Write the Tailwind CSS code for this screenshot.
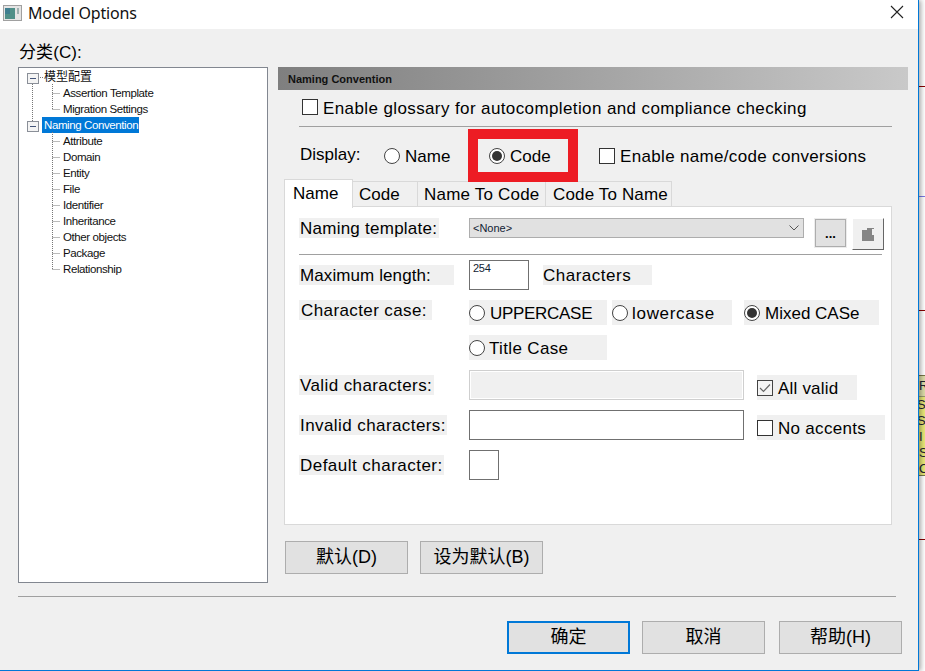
<!DOCTYPE html>
<html lang="en">
<head>
<meta charset="UTF-8">
<title>Model Options</title>
<script src="https://cdn.jsdelivr.net/npm/@tailwindcss/browser@4"></script>
</head>
<body class="bg-white">
<div class="relative w-[925px] h-[671px] overflow-hidden bg-white text-black text-[17px] font-['Liberation_Sans','Noto_Sans_CJK_SC',sans-serif]">

  <!-- app behind the dialog -->
  <div class="absolute left-[919px] top-[86px] w-[6px] h-px bg-[#8b0000]"></div>
  <div class="absolute left-[919px] top-[196px] w-[6px] h-px bg-[#7a7ae6]"></div>
  <div class="absolute left-[919px] top-[310px] w-[6px] h-px bg-[#8b0000]"></div>
  <div class="absolute left-[919px] top-[539px] w-[6px] h-px bg-[#8b0000]"></div>
  <div class="absolute left-[919px] top-[375px] w-[6px] h-[101px] bg-[#e8e878] border-y border-[#77774a] overflow-hidden text-[13px] leading-[16px] text-[#223]">
    <div class="h-[21px] bg-[#dcdca8] border-b border-[#9a9a70] leading-[20px]">R</div>
    <div class="h-4 -ml-[2px]">S</div>
    <div class="h-4 -ml-[2px]">S</div>
    <div class="h-4">I</div>
    <div class="h-4">S</div>
    <div class="h-4">O</div>
  </div>

  <!-- dialog -->
  <div class="relative w-[919px] h-[671px] bg-[#f0f0f0] border-r border-b border-[#0078d7] shadow-[2px_0_5px_rgba(0,0,0,0.35)]">

    <!-- title bar -->
    <div class="h-[29px] bg-white flex items-center pl-[3px]">
      <svg width="19" height="16" viewBox="0 0 19 16" class="mb-[3px]">
        <rect x="0.5" y="0.5" width="18" height="15" fill="#e4e4e4" stroke="#a0a0a0"/>
        <rect x="2" y="3" width="10" height="11" fill="#4f8f88"/>
        <rect x="2" y="3" width="5" height="6" fill="#3f7f90"/>
        <rect x="14" y="3" width="2" height="6" fill="#9fb0b0"/>
      </svg>
      <span class="ml-[6px] mb-[3px] text-[16px] tracking-[-0.15px] text-[#111] font-['Noto_Sans',sans-serif]">Model Options</span>
      <svg width="14" height="14" viewBox="0 0 14 14" class="ml-auto mr-[14px] mb-[5px]">
        <path d="M1 1L13 13M13 1L1 13" stroke="#222" stroke-width="1.1" fill="none"/>
      </svg>
    </div>

    <div class="h-[38px] pl-[19px] pt-[14px] leading-[20px] tracking-[0.1px]">分类(C):</div>

    <div class="flex pl-[18px] h-[516px]">
      <!-- tree -->
      <div class="relative w-[250px] bg-white border border-[#828790] pt-[1px] text-[11.5px] tracking-[-0.4px] leading-[16px] text-[#111] whitespace-nowrap">
        <svg width="70" height="210" viewBox="0 0 70 210" class="absolute left-0 top-0">
          <g stroke="#777" stroke-dasharray="1 1" fill="none">
            <path d="M13.5 16V54M19 9.5H25M33.5 16V42M33.5 64V201M33.5 25.5H41M33.5 41.5H41M33.5 73.5H41M33.5 89.5H41M33.5 105.5H41M33.5 121.5H41M33.5 137.5H41M33.5 153.5H41M33.5 169.5H41M33.5 185.5H41M33.5 201.5H41"/>
          </g>
          <rect x="8.5" y="5.5" width="11" height="10" fill="#f4f4f4" stroke="#8a8f98"/>
          <path d="M11 10.5H17" stroke="#44557a"/>
          <rect x="8.5" y="53.5" width="11" height="10" fill="#f4f4f4" stroke="#8a8f98"/>
          <path d="M11 58.5H17" stroke="#44557a"/>
        </svg>
        <div class="h-4 pl-[25px] text-[12px] tracking-normal">模型配置</div>
        <div class="h-4 pl-[44px]">Assertion Template</div>
        <div class="h-4 pl-[44px]">Migration Settings</div>
        <div class="h-4 pl-[23px]"><span class="inline-block h-4 w-[97px] pl-[2px] bg-[#0078d7] text-white">Naming Convention</span></div>
        <div class="h-4 pl-[44px]">Attribute</div>
        <div class="h-4 pl-[44px]">Domain</div>
        <div class="h-4 pl-[44px]">Entity</div>
        <div class="h-4 pl-[44px]">File</div>
        <div class="h-4 pl-[44px]">Identifier</div>
        <div class="h-4 pl-[44px]">Inheritance</div>
        <div class="h-4 pl-[44px]">Other objects</div>
        <div class="h-4 pl-[44px]">Package</div>
        <div class="h-4 pl-[44px]">Relationship</div>
      </div>

      <!-- right column -->
      <div class="ml-[10px] w-[630px]">
        <div class="h-[23px] pl-[10px] pt-[1px] bg-gradient-to-r from-[#7f7f7f] to-[#c9c9c9] text-[11px] font-bold leading-[22px] text-[#111]">Naming Convention</div>

        <div class="h-[36px] pl-[24px] pt-[9px] flex items-start">
          <span class="w-4 h-4 border border-[#333] bg-white"></span>
          <span class="ml-[5px] mt-px tracking-[0.39px] leading-[17px]">Enable glossary for autocompletion and compliance checking</span>
        </div>
        <div class="ml-[21px] w-[593px] h-px bg-[#a0a0a0]"></div>

        <!-- display row -->
        <div class="flex items-center mt-[2px] ml-[22px] h-[53px] leading-[22px]">
          <span class="w-[84px] -mt-[2px]">Display:</span>
          <span class="w-4 h-4 rounded-full border border-[#444] bg-white"></span>
          <span class="ml-[5px] w-[63px] mt-[2px]">Name</span>
          <div class="relative z-10 w-[110px] h-[53px] border-[10px] border-[#ed1c24] flex items-center pl-[11px]">
            <span class="w-4 h-4 rounded-full border border-[#444] bg-white flex items-center justify-center"><span class="w-[10px] h-[10px] rounded-full bg-[#333]"></span></span>
            <span class="ml-[5px] mt-[2px]">Code</span>
          </div>
          <span class="ml-[21px] w-4 h-4 border border-[#333] bg-white"></span>
          <span class="ml-[5px] mt-[2px] tracking-[0.33px]">Enable name/code conversions</span>
        </div>

        <!-- tabs -->
        <div class="flex items-end -mt-[4px] ml-[6px] h-[29px] relative z-0 leading-[20px]">
          <div class="relative z-10 w-[69px] h-[29px] bg-white border border-b-0 border-[#d9d9d9] pl-[8px] pt-[4px] -mb-px">Name</div>
          <div class="w-[65px] h-[26px] border-y border-r border-[#d9d9d9] pl-[6px] pt-[3px]">Code</div>
          <div class="w-[128px] h-[26px] border-y border-r border-[#d9d9d9] pl-[6px] pt-[3px] tracking-[0.2px]">Name To Code</div>
          <div class="w-[126px] h-[26px] border-y border-r border-[#d9d9d9] pl-[7px] pt-[3px] tracking-[0.15px]">Code To Name</div>
        </div>

        <!-- panel -->
        <div class="ml-[6px] w-[608px] h-[319px] -mt-px bg-white border border-[#d9d9d9] pl-[14px] pt-[11px] leading-[22px]">
          <div class="flex items-start h-[32px]">
            <div class="w-[170px]"><span class="block w-[140px] h-[20px] bg-[#f0f0f0] pl-px tracking-[0.25px]">Naming template:</span></div>
            <div class="w-[335px] h-[20px] bg-[#e1e1e1] border border-[#adadad] flex items-center pl-[3px] text-[11px] text-[#123]">
              <span>&lt;None&gt;</span>
              <svg width="10" height="6" viewBox="0 0 10 6" class="ml-auto mr-[4px]"><path d="M0.5 0.5L5 5L9.5 0.5" stroke="#555" fill="none"/></svg>
            </div>
            <div class="ml-[11px] mt-px w-[31px] h-[28px] bg-[#e1e1e1] border border-[#adadad] text-center font-bold text-[13px] leading-[28px] outline outline-[#ececec]">...</div>
            <div class="ml-[6px] w-[32px] h-[32px] bg-[#f0f0f0] border border-t-white border-l-white border-r-[#666] border-b-[#666] flex items-center justify-center">
              <svg width="12" height="13" viewBox="0 0 12 13"><path d="M0 2H5V0H12V13H0Z" fill="#858585"/><path d="M10 1H12V7H10Z" fill="#f0f0f0"/></svg>
            </div>
          </div>
          <div class="mt-[4px] w-[583px] h-px bg-[#a0a0a0]"></div>

          <div class="flex items-start mt-[5px]">
            <div class="w-[170px] pt-[5px]"><span class="block w-[155px] h-[20px] bg-[#f0f0f0] pl-px tracking-[0.1px]">Maximum length:</span></div>
            <div class="w-[60px] h-[30px] border border-[#707070] pl-[3px] text-[11px] tracking-[-0.3px] leading-[15px] text-[#123]">254</div>
            <div class="ml-[14px] mt-[5px] w-[109px] h-[20px] bg-[#f0f0f0] tracking-[0.5px]">Characters</div>
          </div>

          <div class="flex items-start mt-[10px]">
            <div class="w-[170px]"><span class="block w-[133px] h-[20px] bg-[#f0f0f0] pl-[2px] tracking-[0.4px]">Character case:</span></div>
            <div class="w-[138px] h-[25px] bg-[#f0f0f0] flex items-center">
              <span class="w-4 h-4 rounded-full border border-[#444] bg-white"></span><span class="ml-[5px] mt-[2px] tracking-[-0.3px]">UPPERCASE</span>
            </div>
            <div class="ml-[5px] w-[120px] h-[25px] bg-[#f0f0f0] flex items-center">
              <span class="w-4 h-4 rounded-full border border-[#444] bg-white"></span><span class="ml-[4px] mt-[2px] tracking-[0.7px]">lowercase</span>
            </div>
            <div class="ml-[12px] w-[135px] h-[25px] bg-[#f0f0f0] flex items-center">
              <span class="w-4 h-4 rounded-full border border-[#444] bg-white flex items-center justify-center"><span class="w-[10px] h-[10px] rounded-full bg-[#333]"></span></span><span class="ml-[5px] mt-[2px]">Mixed CASe</span>
            </div>
          </div>

          <div class="mt-[10px] ml-[170px] w-[138px] h-[25px] bg-[#f0f0f0] flex items-center">
            <span class="w-4 h-4 rounded-full border border-[#444] bg-white"></span><span class="ml-[4px] mt-[2px] tracking-[0.35px]">Title Case</span>
          </div>

          <div class="flex items-start mt-[10px]">
            <div class="w-[170px] pt-[5px]"><span class="block w-[135px] h-[20px] bg-[#f0f0f0] pl-px tracking-[0.4px]">Valid characters:</span></div>
            <div class="w-[275px] h-[30px] bg-[#f0f0f0] border border-[#cfcfcf] shadow-[inset_0_0_0_1px_white]"></div>
            <div class="ml-[13px] mt-[5px] w-[100px] h-[25px] bg-[#f0f0f0] flex items-center">
              <span class="w-4 h-4 border border-[#444] bg-[#f4f4f4] flex items-center justify-center">
                <svg width="12" height="10" viewBox="0 0 12 10"><path d="M1 5L4.5 8.5L11 1.5" stroke="#666" stroke-width="1.2" fill="none"/></svg>
              </span><span class="ml-[5px] mt-[2px] tracking-[0.2px]">All valid</span>
            </div>
          </div>

          <div class="flex items-start mt-[10px]">
            <div class="w-[170px] pt-[5px]"><span class="block w-[148px] h-[20px] bg-[#f0f0f0] pl-px tracking-[0.42px] whitespace-nowrap">Invalid characters:</span></div>
            <div class="w-[275px] h-[30px] bg-white border border-[#707070]"></div>
            <div class="ml-[13px] mt-[5px] w-[128px] h-[25px] bg-[#f0f0f0] flex items-center">
              <span class="w-4 h-4 border border-[#333] bg-white"></span><span class="ml-[5px] mt-[2px] tracking-[0.3px]">No accents</span>
            </div>
          </div>

          <div class="flex items-start mt-[10px]">
            <div class="w-[170px] pt-[5px]"><span class="block w-[145px] h-[20px] bg-[#f0f0f0] pl-px tracking-[0.47px] whitespace-nowrap">Default character:</span></div>
            <div class="w-[30px] h-[30px] bg-white border border-[#707070]"></div>
          </div>
        </div>

        <div class="flex ml-[7px] mt-[16px] gap-[12px] text-[18px]">
          <div class="w-[123px] h-[33px] bg-[#e1e1e1] border border-[#adadad] flex items-center justify-center">默认(D)</div>
          <div class="w-[123px] h-[33px] bg-[#e1e1e1] border border-[#adadad] flex items-center justify-center">设为默认(B)</div>
        </div>
      </div>
    </div>

    <div class="ml-[18px] mt-[13px] w-[878px] h-px bg-[#a0a0a0]"></div>

    <!-- footer buttons -->
    <div class="flex ml-[507px] mt-[24px] text-[18px]">
      <div class="w-[123px] h-[33px] bg-[#e1e1e1] border-2 border-[#0078d7] flex items-center justify-center">确定</div>
      <div class="ml-[12px] w-[123px] h-[33px] bg-[#e1e1e1] border border-[#adadad] flex items-center justify-center">取消</div>
      <div class="ml-[14px] w-[123px] h-[33px] bg-[#e1e1e1] border border-[#adadad] flex items-center justify-center">帮助(H)</div>
    </div>
  </div>
</div>
</body>
</html>
